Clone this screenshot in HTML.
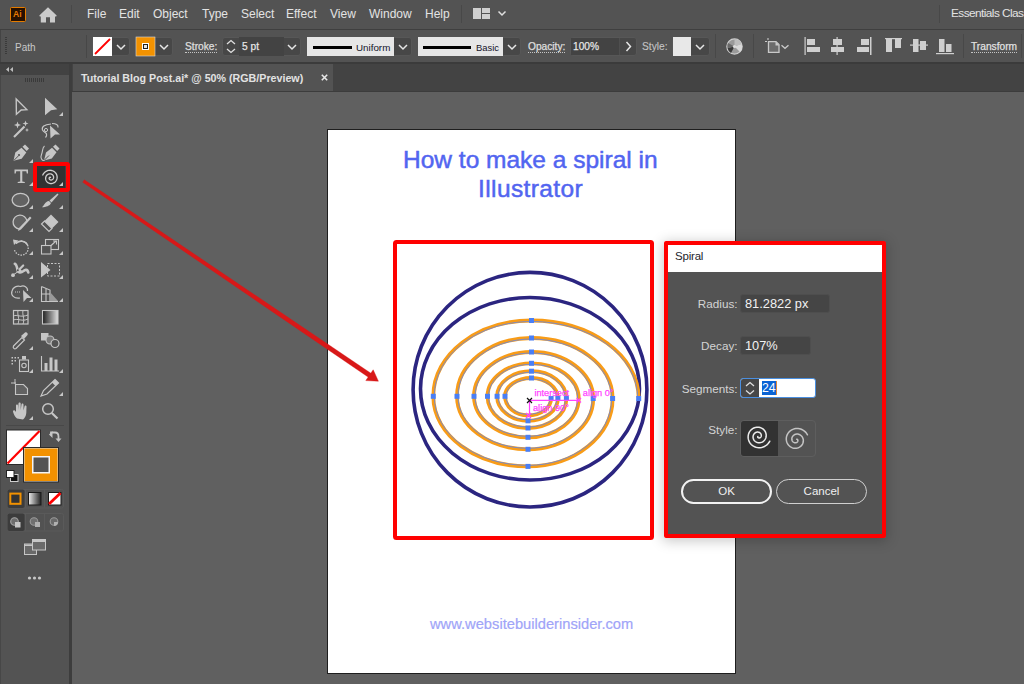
<!DOCTYPE html>
<html><head><meta charset="utf-8">
<style>
*{margin:0;padding:0;box-sizing:border-box}
html,body{width:1024px;height:684px;overflow:hidden;background:#606060;font-family:"Liberation Sans",sans-serif}
.a{position:absolute}
.t{position:absolute;white-space:nowrap;line-height:1}
.mi{position:absolute;top:8px;font-size:12px;color:#e3e3e3;white-space:nowrap;line-height:1}
.sep{position:absolute;width:1px;background:#484848}
.lbl{position:absolute;font-size:10.2px;color:#e2e2e2;top:42px;white-space:nowrap;line-height:1;-webkit-text-stroke:0.25px #d8d8d8}
.ul{border-bottom:1px dotted #c4c4c4;padding-bottom:0px}
.dd{position:absolute;top:37px;height:19px;background:#474747;border-radius:0 3px 3px 0;border:1px solid #575757;border-left:none}
svg{position:absolute;overflow:visible}
</style></head><body>
<!-- MENU BAR -->
<div class="a" style="left:0;top:0;width:1024px;height:29px;background:#535353"></div>
<div class="a" style="left:0;top:29px;width:1024px;height:1px;background:#3f3f3f"></div>
<!-- Ai logo -->
<div class="a" style="left:10px;top:7px;width:16px;height:15px;background:#261000;border:1.3px solid #e57c00;border-radius:1.5px"></div>
<div class="t" style="left:13px;top:10px;font-size:8.6px;font-weight:bold;color:#e87a00">Ai</div>
<!-- home -->
<svg style="left:39px;top:7px" width="18" height="16"><path d="M9 0.3 L17.7 8.6 L17.2 9.6 L16 9.6 L16 15.6 L11 15.6 L11 10.2 L7 10.2 L7 15.6 L1.8 15.6 L1.8 9.6 L0.8 9.6 L0.3 8.6 Z" fill="#cbcbcb"/></svg>
<div class="sep" style="left:71px;top:5px;height:18px"></div>
<div class="mi" style="left:87px">File</div>
<div class="mi" style="left:119px">Edit</div>
<div class="mi" style="left:153px">Object</div>
<div class="mi" style="left:202px">Type</div>
<div class="mi" style="left:241px">Select</div>
<div class="mi" style="left:286px">Effect</div>
<div class="mi" style="left:330px">View</div>
<div class="mi" style="left:369px">Window</div>
<div class="mi" style="left:425px">Help</div>
<div class="sep" style="left:461px;top:5px;height:18px"></div>
<svg style="left:473px;top:8px" width="40" height="12"><rect x="0" y="0" width="8" height="11" fill="#cfcfcf"/><rect x="9" y="0" width="8" height="5" fill="#cfcfcf"/><rect x="9" y="6" width="8" height="5" fill="#cfcfcf"/><path d="M25.5 3.5 L29 7 L32.5 3.5" stroke="#e0e0e0" stroke-width="1.5" fill="none"/></svg>
<div class="sep" style="left:939px;top:5px;height:18px"></div>
<div class="mi" style="left:951px;font-size:11.8px;letter-spacing:-0.55px">Essentials Classic</div>

<!-- CONTROL BAR -->
<div class="a" style="left:0;top:30px;width:1024px;height:32px;background:#535353"></div>
<div class="a" style="left:0;top:30px;width:1px;height:32px;background:#444"></div>
<div class="a" style="left:0;top:62px;width:1024px;height:2px;background:#3b3b3b"></div>
<div class="a" style="left:5px;top:37px;width:2px;height:18px;background:repeating-linear-gradient(#3a3a3a 0 1px,transparent 1px 2px)"></div>
<div class="t" style="left:15px;top:43px;font-size:10px;color:#c8c8c8">Path</div>
<div class="sep" style="left:86px;top:35px;height:23px;background:#474747"></div>
<!-- fill swatch -->
<div class="a" style="left:92px;top:37px;width:38px;height:19px;border-radius:3px;background:#474747;border:1px solid #575757"></div>
<svg style="left:93px;top:37px" width="19" height="19"><rect x="0" y="0" width="19" height="19" fill="#fff"/><path d="M2 17 L17 2" stroke="#ff0000" stroke-width="1.8"/></svg>
<svg style="left:116px;top:44px" width="10" height="6"><path d="M1 1 L5 5 L9 1" stroke="#e6e6e6" stroke-width="1.5" fill="none"/></svg>
<!-- stroke swatch -->
<div class="a" style="left:135px;top:37px;width:38px;height:19px;border-radius:3px;background:#474747;border:1px solid #575757"></div>
<svg style="left:136px;top:37px" width="19" height="19"><rect x="0" y="0" width="19" height="19" fill="#f39200" stroke="#d8d8d8" stroke-width="0.6"/><rect x="6" y="6" width="7" height="7" fill="#fff"/><rect x="7" y="7" width="5" height="5" fill="#222"/><rect x="8" y="8" width="3" height="3" fill="#e6e6e6"/></svg>
<svg style="left:159px;top:44px" width="10" height="6"><path d="M1 1 L5 5 L9 1" stroke="#e6e6e6" stroke-width="1.5" fill="none"/></svg>
<div class="lbl ul" style="left:185px">Stroke:</div>
<!-- stroke weight -->
<div class="a" style="left:222px;top:37px;width:79px;height:19px;border-radius:3px;background:#474747;border:1px solid #575757"></div>
<div class="a" style="left:239px;top:37px;width:45px;height:19px;background:#434343"></div>
<svg style="left:225px;top:39px" width="12" height="16"><path d="M2 5 L6 1.5 L10 5 M2 10 L6 13.5 L10 10" stroke="#e0e0e0" stroke-width="1.3" fill="none"/></svg>
<div class="lbl" style="left:242px;color:#f0f0f0">5 pt</div>
<svg style="left:287px;top:44px" width="10" height="6"><path d="M1 1 L5 5 L9 1" stroke="#e6e6e6" stroke-width="1.5" fill="none"/></svg>
<!-- uniform -->
<div class="a" style="left:307px;top:37px;width:105px;height:19px;border-radius:3px;background:#474747;border:1px solid #575757"></div>
<div class="a" style="left:307px;top:37px;width:87px;height:19px;background:#e6e6e6"></div>
<div class="a" style="left:313px;top:46px;width:39px;height:3px;background:#000"></div>
<div class="lbl" style="left:356px;top:42.5px;color:#15152a;font-size:9.8px;-webkit-text-stroke:0px">Uniform</div>
<svg style="left:398px;top:44px" width="10" height="6"><path d="M1 1 L5 5 L9 1" stroke="#e6e6e6" stroke-width="1.5" fill="none"/></svg>
<!-- basic -->
<div class="a" style="left:418px;top:37px;width:103px;height:19px;border-radius:3px;background:#474747;border:1px solid #575757"></div>
<div class="a" style="left:418px;top:37px;width:85px;height:19px;background:#e6e6e6"></div>
<div class="a" style="left:423px;top:46px;width:48px;height:3px;background:#000"></div>
<div class="lbl" style="left:476px;top:42.5px;color:#15152a;font-size:9.4px;-webkit-text-stroke:0px">Basic</div>
<svg style="left:507px;top:44px" width="10" height="6"><path d="M1 1 L5 5 L9 1" stroke="#e6e6e6" stroke-width="1.5" fill="none"/></svg>
<div class="lbl ul" style="left:528px">Opacity:</div>
<!-- opacity -->
<div class="a" style="left:570px;top:37px;width:67px;height:19px;border-radius:3px;background:#474747;border:1px solid #575757"></div>
<div class="a" style="left:571px;top:38px;width:48px;height:17px;background:#434343"></div>
<div class="a" style="left:619px;top:38px;width:1px;height:17px;background:#4f4f4f"></div>
<div class="lbl" style="left:573px;color:#f0f0f0">100%</div>
<svg style="left:625px;top:41px" width="8" height="11"><path d="M1.5 1 L5.5 5.5 L1.5 10" stroke="#e6e6e6" stroke-width="1.5" fill="none"/></svg>
<div class="lbl" style="left:642px;color:#c4c4c4;-webkit-text-stroke:0.1px #c4c4c4">Style:</div>
<div class="a" style="left:672px;top:37px;width:38px;height:19px;border-radius:3px;background:#474747;border:1px solid #575757"></div>
<div class="a" style="left:673px;top:37px;width:18px;height:19px;background:#e8e8e8"></div>
<svg style="left:695px;top:44px" width="10" height="6"><path d="M1 1 L5 5 L9 1" stroke="#e6e6e6" stroke-width="1.5" fill="none"/></svg>
<div class="sep" style="left:715px;top:34px;height:24px"></div>
<!-- recolor -->
<svg style="left:726px;top:38px" width="17" height="17"><circle cx="8.5" cy="8.5" r="7.6" fill="#9a9a9a" stroke="#cfcfcf" stroke-width="1.3"/><path d="M8.5 8.5 L8.5 1 A7.5 7.5 0 0 1 15.5 6 Z" fill="#bdbdbd"/><path d="M8.5 8.5 L15.5 6 A7.5 7.5 0 0 1 14 14 Z" fill="#d8d8d8"/><path d="M8.5 8.5 L5 15 A7.5 7.5 0 0 1 1.5 10 Z" fill="#3a3a3a"/><path d="M8.5 8.5 L1.5 10 A7.5 7.5 0 0 1 2 5 Z" fill="#6a6a6a"/><circle cx="8.5" cy="8.5" r="1.6" fill="#ddd"/></svg>
<div class="sep" style="left:753px;top:34px;height:24px"></div>
<!-- artboard icon -->
<svg style="left:762px;top:37px" width="30" height="18"><path d="M6.5 4.6 L14 4.6 L17 7.6 L17 15.4 L6.5 15.4 Z" fill="#6c6c6c" stroke="#c9c9c9" stroke-width="1.3"/><path d="M13.5 4.5 L17.5 8.5 L13.5 8.5 Z" fill="#c9c9c9"/><path d="M3 4.5 L5 4.5 M6 1 L6 3" stroke="#c9c9c9" stroke-width="1.1"/><path d="M19.5 8.3 L23 11.3 L26.5 8.3" stroke="#c9c9c9" stroke-width="1.3" fill="none"/></svg>
<!-- align icons -->
<svg style="left:800px;top:36px" width="160" height="20" fill="#cfcfcf">
<rect x="4.5" y="1" width="1.2" height="18"/><rect x="7" y="3" width="8" height="6"/><rect x="7" y="11" width="13" height="5"/>
<rect x="36.5" y="1" width="1.2" height="18"/><rect x="33" y="3" width="9" height="6"/><rect x="31" y="11" width="13" height="5"/>
<rect x="70" y="1" width="1.5" height="18"/><rect x="61" y="3" width="8" height="6"/><rect x="57" y="11" width="12" height="5"/>
<rect x="85" y="2" width="17" height="1.2"/><rect x="86" y="3" width="6" height="13"/><rect x="95" y="3" width="6" height="9"/>
<rect x="110" y="8.5" width="18" height="1.2"/><rect x="113" y="3" width="5.5" height="13"/><rect x="120" y="5" width="6" height="9"/>
<rect x="136" y="17" width="18" height="1.2"/><rect x="139" y="3" width="5.5" height="13"/><rect x="146" y="8" width="5.5" height="8"/>
</svg>
<div class="sep" style="left:963px;top:34px;height:24px"></div>
<div class="lbl ul" style="left:971px;color:#e8e8e8">Transform</div>
<div class="sep" style="left:1021px;top:34px;height:24px"></div>

<!-- TAB BAR -->
<div class="a" style="left:72px;top:64px;width:952px;height:28px;background:#434343"></div>
<div class="a" style="left:73px;top:64px;width:260px;height:27px;background:#535353"></div>
<div class="a" style="left:72px;top:91px;width:952px;height:1px;background:#3c3c3c"></div>
<div class="t" style="left:81px;top:73px;font-size:10.7px;font-weight:bold;color:#e2e2e2">Tutorial Blog Post.ai* @ 50% (RGB/Preview)</div>
<svg style="left:321px;top:74px" width="7" height="7"><path d="M0.8 0.8 L6.2 6.2 M6.2 0.8 L0.8 6.2" stroke="#e8e8e8" stroke-width="1.6"/></svg>

<!-- LEFT PANEL -->
<div class="a" style="left:69px;top:64px;width:3px;height:620px;background:#3d3d3d"></div>
<div class="a" style="left:0;top:64px;width:69px;height:11px;background:#424242"></div>
<svg style="left:6px;top:67px" width="8" height="5"><path d="M3 0 L0 2.5 L3 5 Z M7 0 L4 2.5 L7 5 Z" fill="#bdbdbd"/></svg>
<div class="a" style="left:0;top:75px;width:69px;height:609px;background:#535353"></div>
<div class="a" style="left:0;top:75px;width:1px;height:609px;background:#474747"></div>
<div class="a" style="left:25px;top:78px;width:19px;height:4px;background:repeating-linear-gradient(90deg,#3a3a3a 0 1px,transparent 1px 2px)"></div>

<!-- TOOLS -->
<svg style="left:0;top:0" width="70" height="684">
<rect x="37" y="166" width="28.5" height="22" fill="#323232"/>
<path d="M16.2 99 L26.8 109.6 L21.2 110 L16.4 114.2 Z" fill="none" stroke="#c6c6c6" stroke-width="1.4" stroke-linejoin="miter"/>
<path d="M45 97.8 L57.3 109.2 L51 110.2 L45 115.2 Z" fill="#c6c6c6"/>
<path d="M63.0 112.0 L63.0 116.0 L59.0 116.0 Z" fill="#c6c6c6"/>
<path d="M14 137 L24.5 126.5" stroke="#c6c6c6" stroke-width="2.2"/>
<path d="M17.5 121.5 L18.4 124.1 L21 125 L18.4 125.9 L17.5 128.5 L16.6 125.9 L14 125 L16.6 124.1 Z" fill="#c6c6c6"/>
<path d="M25.5 120.5 L26.3 122.7 L28.5 123.5 L26.3 124.3 L25.5 126.5 L24.7 124.3 L22.5 123.5 L24.7 122.7 Z" fill="#c6c6c6"/>
<path d="M27 128 L27.6 129.4 L29 130 L27.6 130.6 L27 132 L26.4 130.6 L25 130 L26.4 129.4 Z" fill="#c6c6c6"/>
<path d="M51 124 C44 124.5 41.5 127 42.5 130 C43.5 132 46 132.5 46.5 134 C47 136 45.5 137.5 45.5 137.5 M52 123.5 C56 123.5 58.5 125 58 127.5" fill="none" stroke="#c6c6c6" stroke-width="1.2"/>
<circle cx="46" cy="130" r="1.6" fill="none" stroke="#c6c6c6" stroke-width="1"/>
<path d="M50 125.5 L60 134.5 L55 134.5 L50.5 138.5 Z" fill="#c6c6c6"/>
<path d="M13.5 160.8 L15.3 152.5 L21.5 147.8 L26.3 152.6 L21.6 158.8 Z" fill="#c6c6c6"/>
<path d="M22.5 146.8 L25 144.5 L29 148.5 L26.7 151 Z" fill="#c6c6c6"/>
<path d="M14 160.3 L18.5 155.8" stroke="#535353" stroke-width="1"/><circle cx="19" cy="155" r="1.1" fill="#535353"/>
<path d="M33.0 159.0 L33.0 163.0 L29.0 163.0 Z" fill="#c6c6c6"/>
<path d="M44 160.5 L46 152.5 L52 147.8 L56.5 152.3 L51.8 158.5 Z" fill="#c6c6c6"/>
<path d="M53 146.8 L55.5 144.5 L59.5 148.5 L57.2 151 Z" fill="#c6c6c6"/>
<path d="M44.5 146 C42 148 43 151 41.5 154.5 C40 158 42 161 44.5 160.5" fill="none" stroke="#c6c6c6" stroke-width="1.1"/>
<path d="M44.5 160 L49 155.5" stroke="#535353" stroke-width="1"/>
<path d="M14.5 169.5 L28 169.5 L28 173.5 L26.8 173.5 L26.3 171.3 L22.3 171.3 L22.3 181.5 L24.8 182 L24.8 183 L17.7 183 L17.7 182 L20.2 181.5 L20.2 171.3 L16.2 171.3 L15.7 173.5 L14.5 173.5 Z" fill="#c6c6c6"/>
<path d="M33.0 182.0 L33.0 186.0 L29.0 186.0 Z" fill="#c6c6c6"/>
<path d="M50.53 177.47 L50.49 177.41 L50.43 177.35 L50.36 177.29 L50.28 177.25 L50.19 177.22 L50.09 177.21 L49.98 177.21 L49.87 177.23 L49.75 177.27 L49.64 177.33 L49.53 177.41 L49.42 177.50 L49.33 177.62 L49.25 177.75 L49.19 177.90 L49.15 178.07 L49.13 178.24 L49.13 178.42 L49.15 178.61 L49.20 178.80 L49.28 178.99 L49.38 179.17 L49.51 179.35 L49.67 179.51 L49.85 179.66 L50.05 179.78 L50.28 179.89 L50.52 179.96 L50.78 180.01 L51.05 180.03 L51.33 180.01 L51.61 179.96 L51.88 179.87 L52.16 179.75 L52.42 179.59 L52.66 179.40 L52.89 179.17 L53.09 178.91 L53.27 178.62 L53.41 178.31 L53.51 177.97 L53.58 177.62 L53.60 177.26 L53.58 176.88 L53.51 176.51 L53.40 176.14 L53.24 175.77 L53.04 175.43 L52.79 175.10 L52.50 174.80 L52.17 174.53 L51.81 174.30 L51.41 174.11 L50.98 173.96 L50.54 173.86 L50.08 173.82 L49.61 173.83 L49.13 173.90 L48.66 174.02 L48.21 174.21 L47.76 174.44 L47.35 174.74 L46.96 175.08 L46.62 175.47 L46.32 175.91 L46.06 176.38 L45.86 176.89 L45.73 177.43 L45.65 177.98 L45.64 178.55 L45.69 179.13 L45.82 179.70 L46.01 180.26 L46.27 180.79 L46.60 181.31 L46.98 181.78 L47.43 182.22 L47.93 182.60 L48.47 182.92 L49.06 183.19 L49.68 183.38 L50.33 183.50 L50.99 183.55 L51.67 183.52 L52.34 183.41 L53.00 183.22 L53.65 182.95 L54.26 182.61 L54.83 182.19 L55.36 181.70 L55.84 181.15 L56.24 180.54 L56.58 179.88 L56.85 179.18 L57.03 178.44 L57.12 177.68 L57.13 176.91 L57.05 176.13 L56.87 175.37 L56.61 174.62 L56.26 173.90 L55.82 173.22 L55.30 172.59 L54.70 172.01 L54.04 171.51 L53.31 171.08 L52.54 170.74 L51.72 170.49 L50.87 170.33 L50.01 170.27 L49.13 170.32 L48.25 170.46 L47.40 170.71 L46.57 171.06 L45.78 171.50 L45.04 172.04 L44.36 172.67 L43.75 173.38 L43.23 174.15 L42.79 175.00" fill="none" stroke="#cfcfcf" stroke-width="1.3" stroke-linecap="round"/>
<path d="M63.0 182.0 L63.0 186.0 L59.0 186.0 Z" fill="#c6c6c6"/>
<ellipse cx="20.5" cy="200" rx="8.4" ry="6.6" fill="#626262" stroke="#c6c6c6" stroke-width="1.3"/>
<path d="M33.0 205.0 L33.0 209.0 L29.0 209.0 Z" fill="#c6c6c6"/>
<path d="M57.5 193.5 L58.5 194.5 L51.5 202.5 L49.5 200.5 Z" fill="#c6c6c6"/>
<path d="M49 201 L51 203 C50 206 46 207 42 207.3 C44 205.5 45 201.5 49 201 Z" fill="#c6c6c6"/>
<path d="M63.0 205.0 L63.0 209.0 L59.0 209.0 Z" fill="#c6c6c6"/>
<path d="M19 229 A7 7 0 1 1 27 221" fill="#626262" stroke="#c6c6c6" stroke-width="1.3"/>
<path d="M30 216.5 L31.5 218 L21 229.5 L18 231 L19 228 Z" fill="#c6c6c6"/>
<path d="M33.0 228.0 L33.0 232.0 L29.0 232.0 Z" fill="#c6c6c6"/>
<path d="M51 214.5 L58.5 222 L52 228.5 L44.5 221 Z" fill="#c6c6c6"/>
<path d="M44.5 221 L52 228.5 L49 231.5 L41.5 224 Z" fill="none" stroke="#c6c6c6" stroke-width="1.2"/>
<path d="M63.0 228.0 L63.0 232.0 L59.0 232.0 Z" fill="#c6c6c6"/>
<path d="M16 243.5 A7 7 0 1 1 14.5 250" fill="none" stroke="#c6c6c6" stroke-width="1.3" stroke-dasharray="1.5 1.2"/>
<path d="M16 243.5 A7 7 0 0 1 27.5 245" fill="none" stroke="#c6c6c6" stroke-width="1.5"/>
<path d="M13 239.5 L18.5 240.5 L14 245 Z" fill="#c6c6c6"/>
<path d="M33.0 251.0 L33.0 255.0 L29.0 255.0 Z" fill="#c6c6c6"/>
<rect x="45.5" y="239.5" width="13" height="10" fill="none" stroke="#c6c6c6" stroke-width="1.1"/>
<rect x="41.5" y="245.5" width="9.5" height="8.5" fill="#535353" stroke="#c6c6c6" stroke-width="1.1"/>
<path d="M50.5 246 L56 241 M53 241 L56.5 241 L56.5 244.5" fill="none" stroke="#c6c6c6" stroke-width="1.1"/>
<path d="M63.0 251.0 L63.0 255.0 L59.0 255.0 Z" fill="#c6c6c6"/>
<path d="M14.8 263.8 C16.5 264.5 17 267 17.5 270 C18 273 21 273 23.5 271 C25 269.5 27.5 269 28.3 272.5" fill="none" stroke="#c6c6c6" stroke-width="2.6" stroke-linecap="round"/><path d="M23.2 265.5 L20 268.8" stroke="#c6c6c6" stroke-width="2.2" stroke-linecap="round"/><path d="M17.5 270 L20 268.5 L22 271 L19 273 Z" fill="#c6c6c6"/><circle cx="13" cy="275.2" r="1.9" fill="#c6c6c6"/><path d="M13 275 L17.5 272" stroke="#c6c6c6" stroke-width="1"/><circle cx="17.8" cy="270.3" r="1" fill="#535353"/>
<path d="M33.0 275.0 L33.0 279.0 L29.0 279.0 Z" fill="#c6c6c6"/>
<path d="M41 262 L50.5 270 L41 277.5 Z" fill="#c6c6c6"/>
<rect x="47.5" y="263.5" width="12" height="12.5" fill="none" stroke="#c6c6c6" stroke-width="1" stroke-dasharray="2 1.5"/>
<path d="M63.0 275.0 L63.0 279.0 L59.0 279.0 Z" fill="#c6c6c6"/>
<path d="M20 298 C14 299 10.5 295 12 291 C13 287 17 285.5 20.5 286.5 C24 285 28 287 27.5 291" fill="none" stroke="#c6c6c6" stroke-width="1.2"/>
<path d="M15 292 L20 292" stroke="#c6c6c6" stroke-width="1" stroke-dasharray="1 1"/>
<path d="M23 290 L31.5 298 L27 298 L23.5 302 Z" fill="#c6c6c6"/>
<path d="M33.0 298.0 L33.0 302.0 L29.0 302.0 Z" fill="#c6c6c6"/>
<path d="M41.5 286.5 L41.5 301.5 L58 301.5 M41.5 286.5 L50 290 L50 301.5 M41.5 294 L50 294 M46 288 L46 301.5" fill="none" stroke="#c6c6c6" stroke-width="1.1"/>
<path d="M50 292 L58 301 L50 301 Z" fill="#9a9a9a"/>
<path d="M63.0 298.0 L63.0 302.0 L59.0 302.0 Z" fill="#c6c6c6"/>
<rect x="13.5" y="310.5" width="14.5" height="13.5" fill="none" stroke="#c6c6c6" stroke-width="1.2"/>
<path d="M13.5 316 C17 314 20 318 28 315 M13.5 320 C18 318 22 322 28 319 M18 310.5 C17 315 20 319 18 324 M23 310.5 C22 315 25 319 23 324" fill="none" stroke="#c6c6c6" stroke-width="1"/>
<defs><linearGradient id="g1"><stop offset="0" stop-color="#1e1e1e"/><stop offset="1" stop-color="#e0e0e0"/></linearGradient><linearGradient id="g2"><stop offset="0" stop-color="#eeeeee"/><stop offset="1" stop-color="#222"/></linearGradient></defs>
<rect x="42.5" y="310.5" width="15.5" height="13.5" fill="url(#g1)" stroke="#c6c6c6" stroke-width="1.1"/>
<path d="M13.5 346 L22 337.5 L24.5 340 L16 348.5 C14.5 349.5 12.5 348 13.5 346 Z" fill="none" stroke="#c6c6c6" stroke-width="1.2"/>
<path d="M21 336 L25 332.5 C26.5 331.5 28.5 333.5 27.5 335 L24 339 Z" fill="#c6c6c6"/>
<path d="M33.0 346.0 L33.0 350.0 L29.0 350.0 Z" fill="#c6c6c6"/>
<rect x="41" y="333" width="7.5" height="7.5" fill="#c6c6c6"/>
<circle cx="50" cy="340" r="4" fill="#7a7a7a" stroke="#c6c6c6" stroke-width="1.1"/>
<circle cx="55" cy="343.5" r="4" fill="#535353" stroke="#c6c6c6" stroke-width="1.2"/>
<g fill="#c6c6c6"><rect x="11.5" y="357" width="1.5" height="1.5"/><rect x="14.5" y="357" width="1.5" height="1.5"/><rect x="17.5" y="357" width="1.5" height="1.5"/><rect x="11.5" y="360" width="1.5" height="1.5"/><rect x="14.5" y="360" width="1.5" height="1.5"/><rect x="11.5" y="363" width="1.5" height="1.5"/></g>
<rect x="19.5" y="360" width="9" height="11.5" fill="none" stroke="#c6c6c6" stroke-width="1.1"/><rect x="22" y="356" width="4" height="3.5" fill="#c6c6c6"/><circle cx="24" cy="365.5" r="2.2" fill="none" stroke="#c6c6c6" stroke-width="1.1"/>
<path d="M33.0 369.0 L33.0 373.0 L29.0 373.0 Z" fill="#c6c6c6"/>
<path d="M41.5 356 L41.5 371 L59 371" fill="none" stroke="#c6c6c6" stroke-width="1.1"/>
<rect x="44.5" y="363" width="3" height="8" fill="#c6c6c6"/><rect x="49.5" y="357.5" width="3" height="13.5" fill="#c6c6c6"/><rect x="54.5" y="359.5" width="3" height="11.5" fill="#c6c6c6"/>
<path d="M63.0 369.0 L63.0 373.0 L59.0 373.0 Z" fill="#c6c6c6"/>
<path d="M11 383 L16 383 M15 379 L15 384" stroke="#c6c6c6" stroke-width="1"/>
<path d="M15.5 384.5 L23.5 384.5 L27.5 388.5 L27.5 394.5 L15.5 394.5 Z" fill="#626262" stroke="#c6c6c6" stroke-width="1.1"/>
<path d="M55 379.5 L58.5 383 L47 394 L41 396 L43.5 390.5 Z" fill="none" stroke="#c6c6c6" stroke-width="1.2"/><path d="M55 379.5 L58.5 383 L55.5 386 L52 382.5 Z" fill="#c6c6c6"/>
<path d="M63.0 392.0 L63.0 396.0 L59.0 396.0 Z" fill="#c6c6c6"/>
<path d="M17 418.5 C15 417 13 413 13 411 C13.5 409.5 15 410 16 412 L16 405.5 C16 404 18 404 18 405.5 L18 410 L18.5 403.5 C18.5 402 20.7 402 20.7 403.5 L20.7 410 L21.5 404.5 C21.5 403 23.5 403 23.5 404.5 L23.5 410.5 L24.5 406.5 C24.5 405 26.5 405 26.5 406.5 L26.3 413 C26 416 24.5 418.5 23 419.5 Z" fill="#c6c6c6"/>
<path d="M33.0 416.0 L33.0 420.0 L29.0 420.0 Z" fill="#c6c6c6"/>
<circle cx="48" cy="409" r="5.3" fill="none" stroke="#c6c6c6" stroke-width="1.5"/><path d="M51.8 413 L57.5 418.5" stroke="#c6c6c6" stroke-width="2.2"/>
<rect x="6" y="425" width="58" height="1" fill="#484848"/>
<rect x="6.5" y="430" width="34" height="34.5" fill="#fff" stroke="#2a2a2a" stroke-width="1"/>
<path d="M7.5 463.5 L39.5 431" stroke="#ff0000" stroke-width="2.2"/>
<rect x="23.5" y="447.5" width="35" height="34.5" fill="#dcdcdc" stroke="#2a2a2a" stroke-width="1"/>
<rect x="24.5" y="448.5" width="33" height="32.5" fill="#f29100"/>
<rect x="32" y="456" width="18" height="17.5" fill="#f4f4f4"/>
<rect x="33.5" y="457.5" width="15" height="14.5" fill="#535353"/>
<path d="M51 434 L51 432.5 L55 432.5 C57.5 432.5 58.5 434 58.5 436.5 L58.5 440" fill="none" stroke="#c6c6c6" stroke-width="1.8"/><path d="M49 434.5 L52.5 431 L52.5 438 Z M55.5 438.5 L61.5 438.5 L58.5 442 Z" fill="#c6c6c6"/>
<rect x="10.5" y="474.5" width="7.5" height="7" fill="#111" stroke="#cfcfcf" stroke-width="1"/><rect x="6.5" y="470.5" width="7.5" height="7" fill="#fff" stroke="#222" stroke-width="1"/>
<rect x="7.5" y="489.5" width="56" height="18.5" rx="2" fill="#525252" stroke="#5a5a5a" stroke-width="1"/>
<rect x="7.5" y="489.5" width="17" height="18.5" rx="2" fill="#3c3c3c"/>
<path d="M44.5 490 L44.5 507.5 M25.5 490 L25.5 507.5" stroke="#5a5a5a" stroke-width="1"/>
<rect x="10.3" y="493.6" width="10.2" height="10.2" fill="#333" stroke="#f29100" stroke-width="2"/>
<rect x="28.5" y="492.5" width="12.5" height="12.5" fill="url(#g2)" stroke="#1a1a1a" stroke-width="1"/>
<rect x="48.5" y="492.5" width="12.5" height="12.5" fill="#fff" stroke="#1a1a1a" stroke-width="1"/><path d="M49 504 L60.5 493" stroke="#ff0000" stroke-width="2.8"/>
<rect x="7.5" y="513.5" width="56" height="17.5" rx="2" fill="#525252" stroke="#5a5a5a" stroke-width="1"/>
<rect x="7.5" y="513.5" width="17" height="17.5" rx="2" fill="#3c3c3c"/>
<path d="M44.5 514 L44.5 530.5 M25.5 514 L25.5 530.5" stroke="#5a5a5a" stroke-width="1"/>
<circle cx="14.5" cy="521.5" r="3.8" fill="#6e6e6e" stroke="#a6a6a6" stroke-width="1.1"/><rect x="15" y="522" width="5.5" height="5.5" fill="#c6c6c6"/>
<circle cx="34" cy="521.5" r="3.8" fill="#707070" stroke="#9a9a9a" stroke-width="1.1"/><rect x="35" y="522" width="5" height="5" fill="#b0b0b0"/>
<circle cx="54" cy="521.5" r="3.8" fill="#6a6a6a" stroke="#9a9a9a" stroke-width="1.1"/><path d="M54 522 L58 522 A4 4 0 0 1 54 526 Z" fill="#b0b0b0"/>
<rect x="24.5" y="544" width="12" height="10.5" fill="#6a6a6a" stroke="#c6c6c6" stroke-width="1"/><rect x="32.5" y="539.5" width="13" height="10.5" fill="#6a6a6a" stroke="#c6c6c6" stroke-width="1"/><rect x="33" y="540" width="12" height="2" fill="#c6c6c6"/><rect x="25" y="544.5" width="7" height="1.5" fill="#c6c6c6"/>
<circle cx="29.5" cy="578" r="1.6" fill="#c6c6c6"/><circle cx="34.5" cy="578" r="1.6" fill="#c6c6c6"/><circle cx="39.5" cy="578" r="1.6" fill="#c6c6c6"/>
</svg>
<div class="a" style="left:33px;top:162px;width:37px;height:30px;border:4.3px solid #ff0000;border-radius:3px"></div>
<!-- CANVAS -->
<div class="a" style="left:72px;top:92px;width:952px;height:592px;background:#606060"></div>
<div class="a" style="left:327px;top:129px;width:409px;height:545px;background:#fff;border:1px solid #1e1e1e"></div>


<!-- ART -->
<div class="t" style="left:403px;top:148px;font-size:24.5px;color:#5265f0;-webkit-text-stroke:0.5px #5265f0">How to make a spiral in</div>
<div class="t" style="left:478px;top:177.3px;font-size:24.5px;letter-spacing:0.4px;color:#5265f0;-webkit-text-stroke:0.5px #5265f0">Illustrator</div>
<div class="t" style="left:430px;top:617px;font-size:14.7px;color:#a0a4f8;-webkit-text-stroke:0.2px #a0a4f8">www.websitebuilderinsider.com</div>
<svg style="left:0;top:0" width="1024" height="684">
<ellipse cx="530" cy="389.7" rx="116.9" ry="117.3" fill="none" stroke="#2b2580" stroke-width="3.6"/>
<ellipse cx="530" cy="388.75" rx="109.5" ry="91.25" fill="none" stroke="#2b2580" stroke-width="3.6"/>
<path d="M638.7 398.5 C638.7 355.4 590.7 320.5 531.5 320.5 C477.3 320.5 433.3 354.4 433.3 396.3 C433.3 435.0 475.7 466.4 528.0 466.4 C574.7 466.4 612.6 436.0 612.6 398.5 C612.6 365.1 576.3 338.0 531.5 338.0 C490.4 338.0 457.0 364.1 457.0 396.3 C457.0 425.6 488.8 449.3 528.0 449.3 C564.0 449.3 593.2 426.6 593.2 398.5 C593.2 372.8 565.6 352.0 531.5 352.0 C499.7 352.0 474.0 371.8 474.0 396.3 C474.0 418.9 498.2 437.3 528.0 437.3 C556.0 437.3 578.7 419.9 578.7 398.5 C578.7 379.1 557.6 363.3 531.5 363.3 C507.2 363.3 487.5 378.1 487.5 396.3 C487.5 413.8 505.6 428.0 528.0 428.0 C549.2 428.0 566.4 414.8 566.4 398.5 C566.4 383.4 550.8 371.2 531.5 371.2 C512.5 371.2 497.1 382.4 497.1 396.3 C497.1 409.8 510.9 420.8 528.0 420.8 C544.5 420.8 557.9 410.8 557.9 398.5 C557.9 387.2 546.1 378.0 531.5 378.0 C516.9 378.0 505.0 386.2 505.0 396.3 C505.0 406.8 515.3 415.4 528.0 415.4 C540.8 415.4 551.1 407.8 551.1 398.5" fill="none" stroke="#f89c18" stroke-width="3.8"/>
<path d="M637.7 398.5 C637.7 356.0 590.2 321.5 531.5 321.5 C477.8 321.5 434.3 355.0 434.3 396.3 C434.3 434.5 476.2 465.4 528.0 465.4 C574.2 465.4 611.6 435.4 611.6 398.5 C611.6 365.6 575.7 339.0 531.5 339.0 C490.9 339.0 458.0 364.7 458.0 396.3 C458.0 425.0 489.3 448.3 528.0 448.3 C563.5 448.3 592.2 426.0 592.2 398.5 C592.2 373.4 565.0 353.0 531.5 353.0 C500.3 353.0 475.0 372.4 475.0 396.3 C475.0 418.4 498.7 436.3 528.0 436.3 C555.4 436.3 577.7 419.4 577.7 398.5 C577.7 379.6 557.0 364.3 531.5 364.3 C507.8 364.3 488.5 378.6 488.5 396.3 C488.5 413.3 506.2 427.0 528.0 427.0 C548.7 427.0 565.4 414.2 565.4 398.5 C565.4 384.0 550.2 372.2 531.5 372.2 C513.1 372.2 498.1 383.0 498.1 396.3 C498.1 409.3 511.5 419.8 528.0 419.8 C544.0 419.8 556.9 410.3 556.9 398.5 C556.9 387.7 545.5 379.0 531.5 379.0 C517.4 379.0 506.0 386.7 506.0 396.3 C506.0 406.3 515.8 414.4 528.0 414.4 C540.2 414.4 550.1 407.3 550.1 398.5" fill="none" stroke="#5a85f0" stroke-width="0.8"/>
<g fill="#4a7ff5"><rect x="636.2" y="396.0" width="5" height="5"/><rect x="529.0" y="318.0" width="5" height="5"/><rect x="430.8" y="393.8" width="5" height="5"/><rect x="525.5" y="463.9" width="5" height="5"/><rect x="610.1" y="396.0" width="5" height="5"/><rect x="529.0" y="335.5" width="5" height="5"/><rect x="454.5" y="393.8" width="5" height="5"/><rect x="525.5" y="446.8" width="5" height="5"/><rect x="590.7" y="396.0" width="5" height="5"/><rect x="529.0" y="349.5" width="5" height="5"/><rect x="471.5" y="393.8" width="5" height="5"/><rect x="525.5" y="434.8" width="5" height="5"/><rect x="529.0" y="360.8" width="5" height="5"/><rect x="485.0" y="393.8" width="5" height="5"/><rect x="525.5" y="425.5" width="5" height="5"/><rect x="563.9" y="396.0" width="5" height="5"/><rect x="529.0" y="368.7" width="5" height="5"/><rect x="494.6" y="393.8" width="5" height="5"/><rect x="525.5" y="418.3" width="5" height="5"/><rect x="555.4" y="396.0" width="5" height="5"/><rect x="529.0" y="375.5" width="5" height="5"/><rect x="502.5" y="393.8" width="5" height="5"/><rect x="548.6" y="396.0" width="5" height="5"/></g>
<g stroke="#ff44ff" stroke-width="1.2" fill="none"><path d="M529.5 400.3 L578.7 400.3 M529.5 400.3 L529.5 415.4"/><path d="M576.5 398 L581 402.5 M581 398 L576.5 402.5 M526 413 L531 418 M531 413 L526 418"/></g>
<path d="M527 398 L532 403 M532 398 L527 403" stroke="#111" stroke-width="1.2"/>
<g font-family="Liberation Sans" font-size="9.2" fill="#ff44ff" stroke="#ff44ff" stroke-width="0.25"><text x="534.4" y="395.8">intersect</text><text x="582.8" y="395.8">align 0°</text><text x="533" y="410.8">align 90°</text></g>
<rect x="395" y="242" width="257" height="296" rx="1.5" fill="none" stroke="#ff0000" stroke-width="4"/>
<path d="M82.7 182.2 L370.2 378.5 L372.8 374.5 L84.3 179.8 Z" fill="#d81818" stroke="#d81818" stroke-width="0.3" stroke-linejoin="round"/>
<path d="M378.4 381.2 L373.2 369.8 L365.8 380.6 Z" fill="#d81818" stroke="#d81818" stroke-width="0.4" stroke-linejoin="round"/>
</svg>

<!-- DIALOG -->
<div class="a" style="left:664px;top:241px;width:222px;height:297px;box-shadow:0 2px 12px 1px rgba(0,0,0,0.22)"></div>
<div class="a" style="left:668px;top:245px;width:214px;height:27px;background:#fff"></div>
<div class="a" style="left:668px;top:272px;width:214px;height:262px;background:#535353"></div>
<div class="a" style="left:664px;top:241px;width:222px;height:297px;border:4px solid #ff0000;border-radius:2px"></div>
<div class="t" style="left:675px;top:251px;font-size:11.5px;letter-spacing:-0.2px;color:#1e1e2e">Spiral</div>
<div class="t" style="left:640px;width:97.5px;text-align:right;top:297.5px;font-size:11.7px;color:#d4d4d4">Radius:</div>
<div class="t" style="left:640px;width:97.5px;text-align:right;top:339.5px;font-size:11.7px;color:#d4d4d4">Decay:</div>
<div class="t" style="left:640px;width:97.5px;text-align:right;top:382.5px;font-size:11.7px;color:#d4d4d4">Segments:</div>
<div class="t" style="left:640px;width:97.5px;text-align:right;top:423.5px;font-size:11.7px;color:#d4d4d4">Style:</div>
<div class="a" style="left:740px;top:294px;width:90px;height:19px;background:#454545;border:1px solid #4e4e4e;border-radius:3px"></div>
<div class="t" style="left:745px;top:297.5px;font-size:12.8px;color:#f2f2f2">81.2822 px</div>
<div class="a" style="left:740px;top:336px;width:71px;height:19px;background:#454545;border:1px solid #4e4e4e;border-radius:3px"></div>
<div class="t" style="left:745px;top:339.5px;font-size:12.8px;color:#f2f2f2">107%</div>
<div class="a" style="left:740px;top:378px;width:76px;height:20px;background:#fff;border:1px solid #4a8fe0;border-radius:3px"></div>
<div class="a" style="left:741px;top:379px;width:18px;height:18px;background:#474747;border-radius:2px 0 0 2px"></div>
<svg style="left:743px;top:381px" width="14" height="15"><path d="M3 5 L7 1.5 L11 5 M3 9.5 L7 13 L11 9.5" stroke="#e0e0e0" stroke-width="1.3" fill="none"/></svg>
<div class="a" style="left:762px;top:381px;width:14px;height:14px;background:#0b64d4"></div>
<div class="t" style="left:762px;top:382px;font-size:12.3px;color:#fff">24</div>
<div class="a" style="left:776px;top:381px;width:1px;height:14px;background:#e08a3a"></div>
<div class="a" style="left:740px;top:420px;width:76px;height:37px;border:1px solid #5e5e5e;border-radius:4px;background:#535353"></div>
<div class="a" style="left:741px;top:421px;width:37px;height:35px;background:#323232;border-radius:3px 0 0 3px"></div>
<svg style="left:0;top:0" width="1024" height="684">
<path d="M757.82 436.42 L757.77 436.54 L757.73 436.67 L757.72 436.82 L757.74 436.97 L757.79 437.13 L757.87 437.28 L757.97 437.44 L758.11 437.57 L758.27 437.70 L758.46 437.80 L758.68 437.88 L758.91 437.92 L759.16 437.94 L759.42 437.91 L759.68 437.85 L759.95 437.75 L760.21 437.61 L760.45 437.42 L760.68 437.20 L760.88 436.93 L761.05 436.64 L761.18 436.31 L761.27 435.96 L761.31 435.58 L761.30 435.19 L761.25 434.80 L761.13 434.40 L760.96 434.01 L760.74 433.64 L760.46 433.29 L760.13 432.97 L759.75 432.69 L759.33 432.45 L758.87 432.27 L758.37 432.14 L757.86 432.08 L757.33 432.09 L756.79 432.16 L756.25 432.30 L755.73 432.52 L755.22 432.81 L754.75 433.17 L754.32 433.59 L753.94 434.07 L753.62 434.61 L753.36 435.20 L753.18 435.82 L753.08 436.48 L753.05 437.15 L753.12 437.84 L753.28 438.52 L753.52 439.19 L753.85 439.83 L754.27 440.44 L754.77 441.00 L755.34 441.50 L755.98 441.93 L756.69 442.28 L757.44 442.54 L758.23 442.71 L759.05 442.78 L759.88 442.74 L760.71 442.60 L761.53 442.35 L762.33 442.00 L763.08 441.54 L763.78 440.98 L764.41 440.33 L764.97 439.60 L765.43 438.79 L765.79 437.92 L766.05 437.00 L766.18 436.05 L766.20 435.07 L766.10 434.08 L765.87 433.11 L765.51 432.16 L765.03 431.25 L764.44 430.40 L763.73 429.61 L762.93 428.92 L762.03 428.33 L761.05 427.84 L760.02 427.48 L758.93 427.25 L757.81 427.16 L756.67 427.20 L755.54 427.39 L754.43 427.73 L753.35 428.20 L752.34 428.82 L751.40 429.56 L750.55 430.42 L749.81 431.39 L749.19 432.45 L748.70 433.60 L748.35 434.81 L748.16 436.07 L748.13 437.35 L748.25 438.64 L748.54 439.91 L748.99 441.15 L749.60 442.34 L750.35 443.45 L751.25 444.46 L752.27 445.37 L753.41 446.14 L754.65 446.78 L755.97 447.26 L757.36 447.57 L758.78 447.71 L760.22 447.67 L761.65 447.45 L763.06 447.05 L764.42 446.47 L765.71 445.73 L766.90 444.82 L767.98 443.76 L768.93 442.56 L769.73 441.24" fill="none" stroke="#ececec" stroke-width="1.5" stroke-linecap="round"/>
<path d="M796.69 439.25 L796.82 439.24 L796.95 439.25 L797.09 439.29 L797.23 439.35 L797.36 439.43 L797.49 439.54 L797.61 439.68 L797.71 439.83 L797.79 440.01 L797.85 440.20 L797.89 440.41 L797.90 440.63 L797.88 440.86 L797.84 441.10 L797.76 441.33 L797.64 441.57 L797.49 441.79 L797.32 442.01 L797.10 442.20 L796.86 442.38 L796.59 442.53 L796.30 442.66 L795.98 442.75 L795.65 442.80 L795.30 442.82 L794.94 442.79 L794.58 442.72 L794.22 442.61 L793.86 442.45 L793.52 442.24 L793.19 442.00 L792.89 441.71 L792.61 441.38 L792.37 441.01 L792.17 440.61 L792.01 440.18 L791.90 439.72 L791.84 439.24 L791.83 438.75 L791.88 438.25 L791.98 437.75 L792.15 437.26 L792.37 436.78 L792.65 436.31 L792.99 435.87 L793.38 435.47 L793.82 435.10 L794.31 434.78 L794.83 434.51 L795.40 434.30 L796.00 434.15 L796.61 434.07 L797.25 434.05 L797.89 434.10 L798.53 434.23 L799.17 434.43 L799.79 434.71 L800.38 435.05 L800.94 435.47 L801.46 435.95 L801.93 436.49 L802.34 437.09 L802.69 437.74 L802.97 438.43 L803.17 439.16 L803.30 439.92 L803.34 440.70 L803.29 441.49 L803.16 442.28 L802.94 443.06 L802.63 443.82 L802.23 444.55 L801.75 445.24 L801.19 445.88 L800.56 446.47 L799.86 446.98 L799.09 447.43 L798.28 447.79 L797.41 448.06 L796.52 448.24 L795.60 448.32 L794.66 448.30 L793.73 448.18 L792.80 447.95 L791.89 447.62 L791.02 447.19 L790.18 446.66 L789.41 446.03 L788.70 445.32 L788.06 444.52 L787.51 443.65 L787.05 442.72 L786.70 441.73 L786.45 440.71 L786.31 439.64 L786.29 438.56 L786.39 437.48 L786.60 436.40 L786.94 435.34 L787.40 434.32 L787.96 433.34 L788.64 432.42 L789.42 431.57 L790.30 430.80 L791.26 430.13 L792.30 429.57 L793.41 429.11 L794.56 428.78 L795.76 428.57 L796.98 428.49 L798.22 428.55 L799.45 428.74 L800.66 429.06 L801.84 429.53 L802.98 430.12 L804.05 430.83 L805.04 431.67 L805.94 432.61 L806.75 433.66 L807.44 434.80" fill="none" stroke="#c4c4c4" stroke-width="1.5" stroke-linecap="round"/>
</svg>
<div class="a" style="left:681px;top:479px;width:91px;height:25px;border:2px solid #f2f2f2;border-radius:13px"></div>
<div class="t" style="left:681px;width:91px;text-align:center;top:486px;font-size:11.5px;color:#f0f0f0">OK</div>
<div class="a" style="left:776px;top:479px;width:91px;height:25px;border:1.8px solid #d0d0d0;border-radius:13px"></div>
<div class="t" style="left:776px;width:91px;text-align:center;top:486px;font-size:11.5px;color:#f0f0f0">Cancel</div>
</body></html>
